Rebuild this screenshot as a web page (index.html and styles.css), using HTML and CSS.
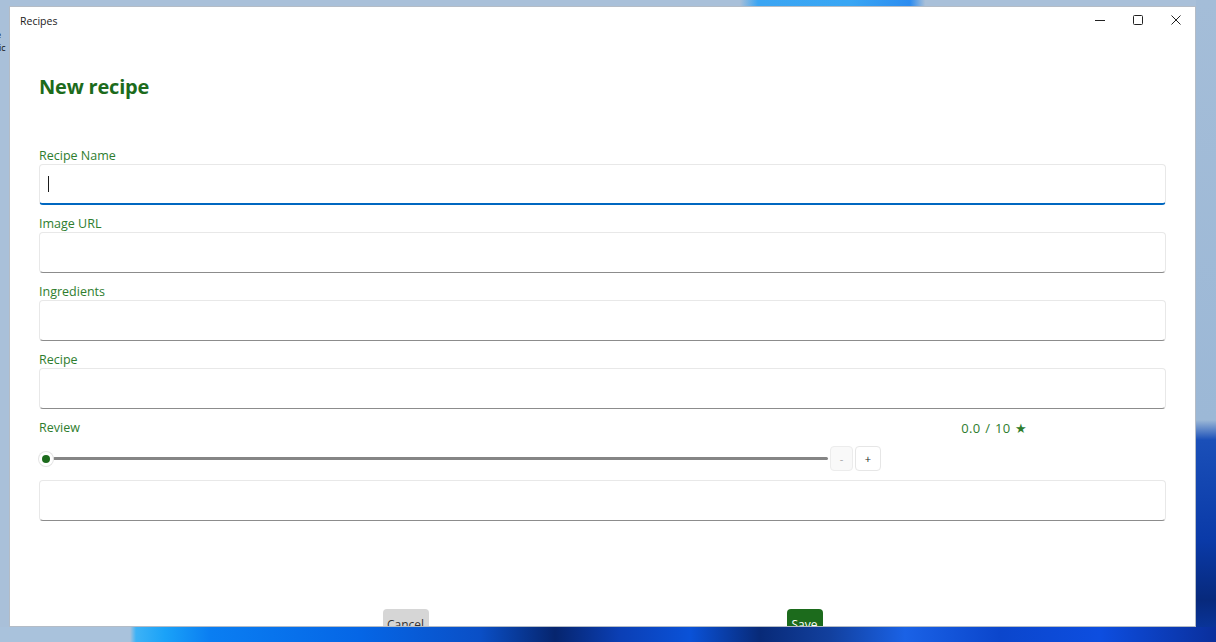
FILE: index.html
```html
<!DOCTYPE html>
<html lang="en">
<head>
<meta charset="utf-8">
<title>Recipes</title>
<link rel="stylesheet" href="styles.css">
</head>
<body>
<div class="desktop">
  <div class="desk-label">e<br>fic</div>
  <div class="window">
    <div class="titlebar">
      <span class="title">Recipes</span>
      <div class="caption">
        <span class="cap-btn">
          <svg width="10" height="10" viewBox="0 0 10 10"><path d="M0 5.5h10" stroke="#222" stroke-width="1"/></svg>
        </span>
        <span class="cap-btn">
          <svg width="10" height="10" viewBox="0 0 10 10"><rect x="0.5" y="0.5" width="9" height="9" rx="1" fill="none" stroke="#222" stroke-width="1"/></svg>
        </span>
        <span class="cap-btn">
          <svg width="10" height="10" viewBox="0 0 10 10"><path d="M0.5 0.5l9 9M9.5 0.5l-9 9" stroke="#222" stroke-width="1"/></svg>
        </span>
      </div>
    </div>
    <main class="content">
      <h1 class="heading">New recipe</h1>

      <div class="field">
        <label class="label">Recipe Name</label>
        <div class="input focused"><span class="caret"></span></div>
      </div>

      <div class="field">
        <label class="label">Image URL</label>
        <div class="input"></div>
      </div>

      <div class="field">
        <label class="label">Ingredients</label>
        <div class="input"></div>
      </div>

      <div class="field">
        <label class="label">Recipe</label>
        <div class="input"></div>
      </div>

      <div class="field">
        <div class="review-head">
          <label class="label">Review</label>
          <span class="rating">0.0 / 10 ★</span>
        </div>
        <div class="slider-row">
          <div class="slider">
            <span class="thumb"></span>
            <span class="track"></span>
          </div>
          <button class="step step-disabled">-</button>
          <button class="step">+</button>
        </div>
        <div class="input"></div>
      </div>

      <div class="actions">
        <button class="btn btn-cancel">Cancel</button>
        <button class="btn btn-save">Save</button>
      </div>
    </main>
  </div>
</div>
</body>
</html>
```

FILE: styles.css
```css
* { box-sizing: border-box; }

html, body {
  margin: 0;
  padding: 0;
}

body {
  width: 1216px;
  height: 642px;
  overflow: hidden;
  font-family: "Open Sans", "Noto Sans", "DejaVu Sans", sans-serif;
}

.desktop {
  position: relative;
  width: 1216px;
  height: 642px;
  background:
    linear-gradient(90deg, #a9c2dc 0, #a9c2dc 130px, #3db2f6 136px, #1aa2f8 165px, #0a7ef2 210px, #0566e6 360px, #0a4fc6 480px, #06256e 555px, #0b3fb5 620px, #0a52d8 690px, #082a78 760px, #12409e 830px, #1a62e6 905px, #0b46cc 1000px, #0d4ee0 1100px, #0a2f9c 1216px) left bottom / 1216px 15px no-repeat,
    linear-gradient(180deg, #a4bdd8 0, #9cb8d6 420px, #1a4fb8 440px, #0a3aa8 540px, #07297c 600px, #0a3aa8 642px) right top / 20px 642px no-repeat,
    linear-gradient(90deg, #a8bfd8 0, #3ba5f3 18px, #38a6f4 110px, #2c8cf0 170px, #a8bfd8 185px) 740px 0 / 185px 7px no-repeat,
    #a9c0d9;
}

.desk-label {
  position: absolute;
  left: -4px;
  top: 28px;
  font-size: 9px;
  line-height: 13px;
  color: #111;
}

.window {
  position: absolute;
  left: 9px;
  top: 6px;
  width: 1187px;
  height: 621px;
  background: #ffffff;
  border: 1px solid #b4bcc6;
  overflow: hidden;
}

.titlebar {
  height: 28px;
  display: flex;
  align-items: center;
  justify-content: space-between;
  padding-left: 10px;
}

.title {
  font-size: 10.5px;
  color: #1b1b1b;
}

.caption {
  display: flex;
  align-self: flex-start;
  height: 26px;
}

.cap-btn {
  width: 38px;
  height: 26px;
  display: flex;
  align-items: center;
  justify-content: center;
}

.content {
  padding: 0 29px;
}

.heading {
  margin: 38px 0 0;
  font-size: 20px;
  line-height: 28px;
  font-weight: 700;
  color: #1c6b1c;
  letter-spacing: -0.2px;
}

.field {
  display: flex;
  flex-direction: column;
  margin-top: 10px;
}

.heading + .field {
  margin-top: 46px;
}

.label {
  display: block;
  padding-top: 1px;
  font-size: 12.5px;
  line-height: 16px;
  color: #2e7d2e;
}

.input {
  position: relative;
  height: 41px;
  background: #ffffff;
  border: 1px solid #e8e8e8;
  border-bottom: 1px solid #8c8c8c;
  border-radius: 4px;
}

.input.focused {
  border-bottom: 2px solid #0067c0;
}

.caret {
  position: absolute;
  left: 8px;
  top: 11px;
  width: 1px;
  height: 16px;
  background: #1b1b1b;
}

.review-head {
  display: flex;
  justify-content: space-between;
  align-items: center;
  padding-right: 139px;
}

.rating {
  padding-top: 1px;
  font-size: 13px;
  line-height: 16px;
  word-spacing: 1px;
  letter-spacing: 0.3px;
  color: #2e7d2e;
}

.slider-row {
  display: flex;
  align-items: center;
  gap: 2px;
  margin-top: 10px;
  height: 25px;
}

.slider {
  display: flex;
  align-items: center;
  width: 789px;
  height: 25px;
}

.thumb {
  position: relative;
  flex: 0 0 14px;
  width: 14px;
  height: 14px;
  border-radius: 50%;
  background: #ffffff;
  box-shadow: 0 0 0 1px #e4e4e4;
}

.thumb::after {
  content: "";
  position: absolute;
  left: 3px;
  top: 3px;
  width: 8px;
  height: 8px;
  border-radius: 50%;
  background: #1c6b1c;
}

.track {
  flex: 1;
  height: 3px;
  background: #858585;
  border-radius: 2px;
}

.step {
  width: 26px;
  height: 25px;
  padding: 0;
  border: 1px solid #e6e6e6;
  border-radius: 4px;
  background: #ffffff;
  font-family: inherit;
  font-size: 11px;
  color: #1b1b1b;
}

.step-disabled {
  width: 23px;
  background: #f9f9f9;
  color: #a8a8a8;
  border-color: #ececec;
}

.review-head + .slider-row + .input {
  margin-top: 9px;
}

.actions {
  display: flex;
  justify-content: center;
  gap: 358px;
  margin-top: 88px;
}

.btn {
  height: 32px;
  padding: 0;
  border: none;
  border-radius: 4px;
  font-family: inherit;
  font-size: 12px;
  line-height: 32px;
}

.btn-cancel {
  width: 46px;
  background: #d6d6d6;
  color: #333333;
}

.btn-save {
  width: 36px;
  background: #1c6b1c;
  color: #ffffff;
}
```
